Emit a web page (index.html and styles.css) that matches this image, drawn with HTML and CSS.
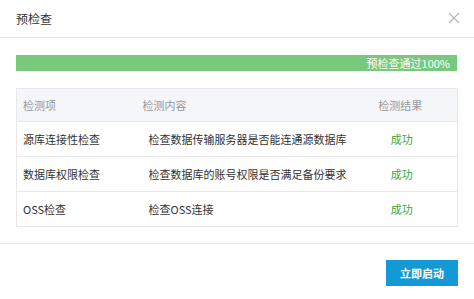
FILE: index.html
```html
<!DOCTYPE html>
<html lang="zh-CN">
<head>
    <meta charset="UTF-8">
    <title>预检查</title>
    <link rel="stylesheet" href="styles.css">
</head>
<body>
    <div class="dialog">
        <div class="dialog-header">
            <span class="dialog-title">预检查</span>
            <svg class="close" width="12" height="12" viewBox="0 0 12 12">
                <path d="M1 1L11 11M11 1L1 11" stroke="#b5b5b5" stroke-width="1.1" fill="none"/>
            </svg>
        </div>

        <div class="dialog-body">
            <div class="progress">
                <div class="progress-bar">预检查通过100%</div>
            </div>

            <table class="check-table">
                <colgroup>
                    <col class="col-item">
                    <col class="col-content">
                    <col class="col-result">
                </colgroup>
                <thead>
                    <tr>
                        <th>检测项</th>
                        <th>检测内容</th>
                        <th class="result">检测结果</th>
                    </tr>
                </thead>
                <tbody>
                    <tr>
                        <td>源库连接性检查</td>
                        <td class="content">检查数据传输服务器是否能连通源数据库</td>
                        <td class="result success">成功</td>
                    </tr>
                    <tr>
                        <td>数据库权限检查</td>
                        <td class="content">检查数据库的账号权限是否满足备份要求</td>
                        <td class="result success">成功</td>
                    </tr>
                    <tr>
                        <td>OSS检查</td>
                        <td class="content">检查OSS连接</td>
                        <td class="result success">成功</td>
                    </tr>
                </tbody>
            </table>
        </div>

        <div class="dialog-footer">
            <button class="start-button">立即启动</button>
        </div>
    </div>
</body>
</html>
```

FILE: styles.css
```css
body {
    margin: 0;
    background: #fff;
    font-family: "Noto Sans CJK SC", "Microsoft YaHei", sans-serif;
    font-size: 11px;
    color: #333;
}
.dialog {
    width: 474px;
    height: 299px;
    background: #fff;
}
.dialog-header {
    height: 37px;
    display: flex;
    align-items: center;
    justify-content: space-between;
    padding: 0 14px 0 16px;
    border-bottom: 1px solid #e8e8e8;
}
.dialog-title {
    font-size: 12px;
    color: #333;
    margin-top: -1px;
}
.close {
    display: block;
    margin-top: -1px;
}
.dialog-body {
    padding: 17px 16px 16px 16px;
    border-bottom: 1px solid #e8e8e8;
}
.progress {
    height: 16px;
    background: #eee;
    margin-right: 1px;
}
.progress-bar {
    width: 100%;
    height: 16px;
    line-height: 16px;
    background: #78c97c;
    color: #fff;
    text-align: right;
    padding-right: 7px;
    box-sizing: border-box;
    font-size: 11px;
}
.check-table {
    width: 442px;
    margin-top: 17px;
    border-collapse: collapse;
    table-layout: fixed;
    border: 1px solid #e8e8e8;
}
.col-item {
    width: 120px;
}
.col-content {
    width: 213px;
}
.check-table th {
    height: 32px;
    background: #f5f6fa;
    color: #999;
    font-weight: normal;
    text-align: left;
    padding: 0 6px;
    border-bottom: 1px solid #e8e8e8;
}
.check-table td {
    height: 34px;
    padding: 0 6px;
    border-bottom: 1px solid #e8e8e8;
    white-space: nowrap;
}
.check-table td.content {
    padding-left: 12px;
}
.check-table .result {
    text-align: center;
}
.check-table th.result {
    padding-left: 0;
    padding-right: 6px;
}
.check-table td.success {
    color: #3aa632;
    padding-left: 3px;
}
.dialog-footer {
    display: flex;
    justify-content: flex-end;
    padding: 16px 16px 0 0;
}
.start-button {
    width: 72px;
    height: 26px;
    border: none;
    background: #139ad6;
    color: #fff;
    font-family: inherit;
    font-size: 11px;
    font-weight: bold;
    cursor: pointer;
}
```
